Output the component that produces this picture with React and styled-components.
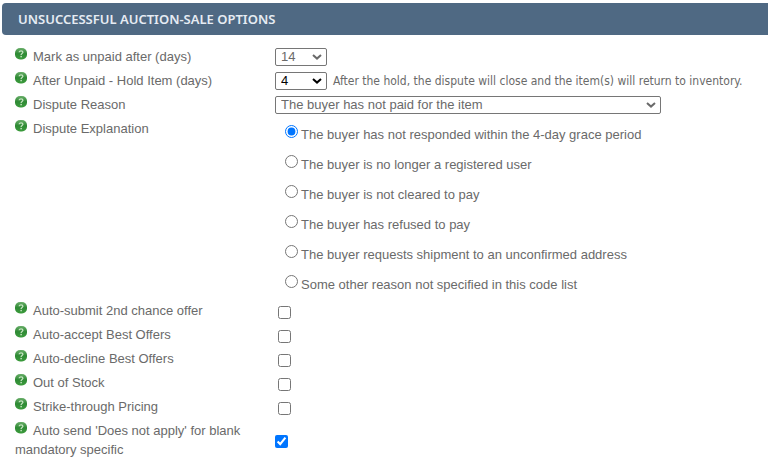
import React from "react";
import styled, { createGlobalStyle } from "styled-components";

const GlobalStyle = createGlobalStyle`
  * {
    box-sizing: border-box;
  }
  body {
    margin: 0;
    background: #fff;
    color: #6a6a6a;
    font-family: "Liberation Sans", Arial, sans-serif;
    font-size: 13px;
    line-height: 19px;
  }
`;

const Panel = styled.form`
  padding: 3px 0 0 2px;
`;

const Title = styled.h1`
  margin: 0;
  padding: 0 16px;
  border-radius: 4px 0 0 4px;
  background: #4f6983;
  color: #e6ecf3;
  font-family: "Noto Sans", Verdana, sans-serif;
  font-size: 13px;
  font-weight: 600;
  line-height: 32px;
`;

const Rows = styled.div`
  padding: 11px 13px 0;
`;

const Row = styled.div`
  display: grid;
  grid-template-columns: 230px 1fr;
  column-gap: 30px;
  min-height: 24px;
`;

const LabelCell = styled.div`
  padding: 1px 0 4px;
`;

const HelpIcon = styled.svg`
  width: 12px;
  height: 12px;
  margin-right: 6px;
  vertical-align: 1px;
`;

const Field = styled.div`
  display: flex;
  align-items: center;
  gap: 6px;
  padding-left: ${(props) => (props.$indent ? "3px" : "0")};
`;

const SelectField = styled(Field)`
  padding-bottom: 2px;
`;

const SelectBox = styled.div`
  display: grid;
  flex-shrink: 0;
  align-items: center;
  width: ${(props) => (props.$wide ? "386px" : "52px")};
  color: ${(props) => (props.$dark ? "#000" : "#6a6a6a")};

  > * {
    grid-area: 1 / 1;
  }
`;

const Select = styled.select`
  appearance: none;
  width: 100%;
  height: 18px;
  padding: 0 20px 0 5px;
  border: 1px solid #767676;
  border-radius: 2px;
  background: #fff;
  color: inherit;
  font-family: inherit;
  font-size: 13px;
  line-height: 16px;
`;

const Arrow = styled.svg`
  justify-self: end;
  width: 10px;
  height: 6px;
  margin-right: 5px;
  pointer-events: none;
`;

const Note = styled.span`
  font-family: "DejaVu Sans Condensed", Tahoma, sans-serif;
  font-size: 12px;
  white-space: nowrap;
`;

const Reasons = styled.div`
  display: flex;
  flex-direction: column;
  gap: 11px;
  padding: 7px 0 6px 10px;
`;

const Reason = styled.label`
  display: flex;
  align-items: flex-start;
  gap: 3px;
`;

const Radio = styled.input`
  width: 13px;
  height: 13px;
  margin: 0;
  accent-color: #0075ff;
`;

const Checkbox = styled.input`
  width: 13px;
  height: 13px;
  margin: 0;
  accent-color: #0075ff;
`;

const reasons = [
  "The buyer has not responded within the 4-day grace period",
  "The buyer is no longer a registered user",
  "The buyer is not cleared to pay",
  "The buyer has refused to pay",
  "The buyer requests shipment to an unconfirmed address",
  "Some other reason not specified in this code list",
];

const options = [
  { id: "second-chance", label: "Auto-submit 2nd chance offer" },
  { id: "accept-offers", label: "Auto-accept Best Offers" },
  { id: "decline-offers", label: "Auto-decline Best Offers" },
  { id: "out-of-stock", label: "Out of Stock" },
  { id: "strike-through", label: "Strike-through Pricing" },
];

const Help = () => (
  <HelpIcon viewBox="0 0 12 12" aria-hidden="true">
    <defs>
      <linearGradient id="help-green" x1="0" y1="0" x2="0" y2="1">
        <stop offset="0" stopColor="#69ae69" />
        <stop offset="0.5" stopColor="#2f8a35" />
        <stop offset="1" stopColor="#3c9c3c" />
      </linearGradient>
    </defs>
    <rect width="12" height="11.5" rx="5" fill="url(#help-green)" />
    <path
      d="M4.2 4.3C4.2 2.3 7.9 2.3 7.9 4.3C7.9 5.5 6.1 5.4 6.1 6.9"
      fill="none"
      stroke="#c4e4c0"
      strokeWidth="1.3"
    />
    <rect x="5.4" y="7.9" width="1.5" height="1.4" fill="#c4e4c0" />
  </HelpIcon>
);

const FieldLabel = ({ htmlFor, id, children }) => (
  <LabelCell>
    <Help />
    {htmlFor ? (
      <label htmlFor={htmlFor}>{children}</label>
    ) : (
      <span id={id}>{children}</span>
    )}
  </LabelCell>
);

const Dropdown = ({ id, value, wide, dark }) => (
  <SelectBox $wide={wide} $dark={dark}>
    <Select id={id} defaultValue={value}>
      <option>{value}</option>
    </Select>
    <Arrow viewBox="0 0 10 6" aria-hidden="true">
      <path
        d="M1 1L5 4.6L9 1"
        fill="none"
        stroke="currentColor"
        strokeWidth="2"
      />
    </Arrow>
  </SelectBox>
);

class App extends React.Component {
  render() {
    return (
      <>
        <GlobalStyle />
        <Panel>
          <Title>UNSUCCESSFUL AUCTION-SALE OPTIONS</Title>
          <Rows>
            <Row>
              <FieldLabel htmlFor="unpaid-days">
                Mark as unpaid after (days)
              </FieldLabel>
              <SelectField>
                <Dropdown id="unpaid-days" value="14" />
              </SelectField>
            </Row>
            <Row>
              <FieldLabel htmlFor="hold-days">
                After Unpaid - Hold Item (days)
              </FieldLabel>
              <SelectField>
                <Dropdown id="hold-days" value="4" dark />
                <Note>
                  After the hold, the dispute will close and the item(s) will
                  return to inventory.
                </Note>
              </SelectField>
            </Row>
            <Row>
              <FieldLabel htmlFor="dispute-reason">Dispute Reason</FieldLabel>
              <SelectField>
                <Dropdown
                  id="dispute-reason"
                  value="The buyer has not paid for the item"
                  wide
                />
              </SelectField>
            </Row>
            <Row>
              <FieldLabel id="explanation">Dispute Explanation</FieldLabel>
              <Reasons role="radiogroup" aria-labelledby="explanation">
                {reasons.map((reason, i) => (
                  <Reason key={reason}>
                    <Radio
                      type="radio"
                      name="explanation"
                      defaultChecked={i === 0}
                    />
                    {reason}
                  </Reason>
                ))}
              </Reasons>
            </Row>
            {options.map((option) => (
              <Row key={option.id}>
                <FieldLabel htmlFor={option.id}>{option.label}</FieldLabel>
                <Field $indent>
                  <Checkbox id={option.id} type="checkbox" />
                </Field>
              </Row>
            ))}
            <Row>
              <FieldLabel htmlFor="does-not-apply">
                Auto send 'Does not apply' for blank mandatory specific
              </FieldLabel>
              <Field>
                <Checkbox id="does-not-apply" type="checkbox" defaultChecked />
              </Field>
            </Row>
          </Rows>
        </Panel>
      </>
    );
  }
}

export default App;
